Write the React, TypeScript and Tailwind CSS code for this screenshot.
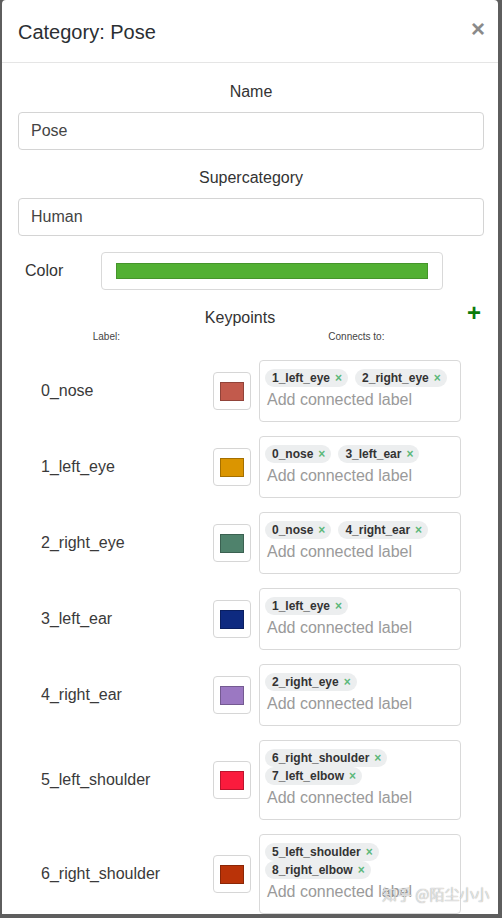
import React from 'react'

type Keypoint = { label: string; color: string; connects: string[] }

const keypoints: Keypoint[] = [
  { label: '0_nose', color: '#c25a4c', connects: ['1_left_eye', '2_right_eye'] },
  { label: '1_left_eye', color: '#db9500', connects: ['0_nose', '3_left_ear'] },
  { label: '2_right_eye', color: '#4f826c', connects: ['0_nose', '4_right_ear'] },
  { label: '3_left_ear', color: '#0e2a80', connects: ['1_left_eye'] },
  { label: '4_right_ear', color: '#9b78c2', connects: ['2_right_eye'] },
  { label: '5_left_shoulder', color: '#fa1b3d', connects: ['6_right_shoulder', '7_left_elbow'] },
  { label: '6_right_shoulder', color: '#ba3308', connects: ['5_left_shoulder', '8_right_elbow'] },
]

const Chip = ({ text }: { text: string }) => (
  <span className='inline-flex items-center h-[18px] rounded-full bg-[#eceeef] pl-[7px] pr-[6px] text-[12px] font-bold text-[#333] leading-none'>
    {text}
    <span className='ml-[5px] text-[12px] text-[#5cb87a] font-bold'>×</span>
  </span>
)

const KeypointRow = ({ kp }: { kp: Keypoint }) => (
  <div className='flex items-center'>
    <div className='w-[195px] pl-[23px] text-[16px] text-[#3a3a3a]'>{kp.label}</div>
    <div className='w-[38px] h-[38px] flex items-center justify-center border border-[#d6d6d6] rounded-[4px] bg-white'>
      <div className='w-[24px] h-[19px] border border-black/25' style={{ backgroundColor: kp.color }} />
    </div>
    <div className='ml-[8px] w-[202px] border border-[#d9d9d9] rounded-[4px] pt-[8px] pb-[10px] px-[5px]'>
      <div className='flex flex-wrap gap-x-[7px]'>
        {kp.connects.map(c => <Chip key={c} text={c} />)}
      </div>
      <div className='h-[24px] pl-[2px] pt-[1px] text-[16px] leading-[24px] text-[#9a9a9a]'>Add connected label</div>
    </div>
  </div>
)

const App = () => {
  return (
    <div className='w-[502px] h-[918px] overflow-hidden bg-[#5e5e5e] font-["Liberation_Sans",Arial,sans-serif]'>
      <div className='ml-[2px] w-[496px] bg-white rounded-t-[4px] text-[#212529] relative'>
        <div className='h-[63px] flex items-center justify-between pl-[16px] pr-[13px] border-b border-[#e5e5e5]'>
          <h5 className='text-[20px] text-[#2b2f33] pt-[1px]'>Category: Pose</h5>
          <span className='text-[24px] font-bold text-[#8a8a8a] leading-none -mt-[5px]'>×</span>
        </div>

        <div className='pl-[16px] pr-[14px] pt-[17px]'>
          <div className='text-center text-[16px] leading-[24px] text-[#333]'>Name</div>
          <div className='mt-[8px] h-[38px] border border-[#d4d4d4] rounded-[4px] px-[12px] flex items-center text-[16px] text-[#444]'>Pose</div>

          <div className='mt-[16px] text-center text-[16px] leading-[24px] text-[#333]'>Supercategory</div>
          <div className='mt-[8px] h-[38px] border border-[#d4d4d4] rounded-[4px] px-[12px] flex items-center text-[16px] text-[#444]'>Human</div>

          <div className='mt-[16px] flex items-center'>
            <div className='w-[83px] pl-[7px] text-[16px] text-[#333]'>Color</div>
            <div className='w-[342px] h-[38px] border border-[#d9d9d9] rounded-[4px] flex items-center justify-center'>
              <div className='w-[312px] h-[16px] bg-[#52b033] border border-black/15' />
            </div>
          </div>

          <div className='mt-[16px] relative h-[24px]'>
            <div className='w-[444px] text-center text-[16px] leading-[24px] text-[#333]'>Keypoints</div>
            <span className='absolute right-[3px] top-[-5px] text-[24px] font-bold text-[#0b7a0b] leading-none'>+</span>
          </div>
          <div className='flex text-[10px] text-[#444] h-[14px] leading-[14px]'>
            <div className='w-[176px] pl-[12px] text-center'>Label:</div>
            <div className='w-[320px] pl-[46px] text-center'>Connects to:</div>
          </div>

          <div className='mt-[16px] flex flex-col gap-[14px]'>
            {keypoints.map(kp => <KeypointRow key={kp.label} kp={kp} />)}
          </div>
        </div>

        <div className='absolute left-[380px] top-[883px] text-[15px] text-white/70 font-["Noto_Sans_CJK_SC",sans-serif] [text-shadow:0_0_1px_#888]'>知乎 @陌尘小小</div>
      </div>
    </div>
  )
}

export default App
